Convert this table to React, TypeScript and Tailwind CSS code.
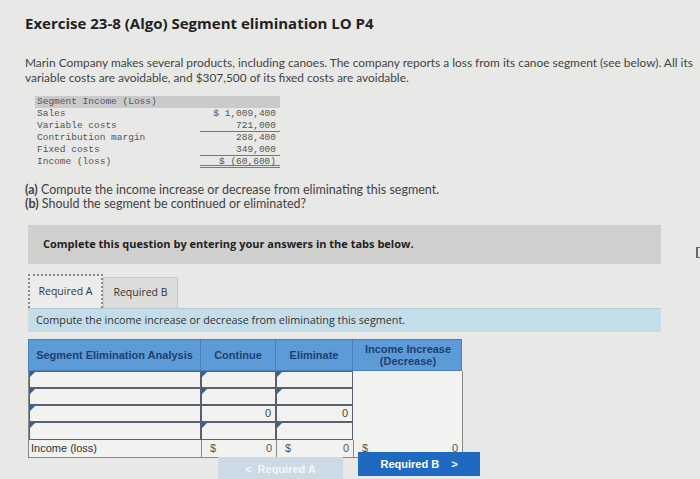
import React from "react";

const segmentRows = [
  { label: "Sales", value: "$ 1,009,400", line: "" },
  { label: "Variable costs", value: "721,000", line: "single" },
  { label: "Contribution margin", value: "288,400", line: "" },
  { label: "Fixed costs", value: "349,000", line: "single" },
  { label: "Income (loss)", value: "$ (60,600)", line: "double" },
];

const Marker = () => (
  <span className="absolute left-0 top-0 w-0 h-0 border-t-[5px] border-t-[#2f5f9e] border-r-[5px] border-r-transparent" />
);

const InputCell = ({ value, marker = true }: { value?: string; marker?: boolean }) => (
  <div className="relative h-full border border-[#56606e] bg-[#f2f2f0] flex items-center justify-end pr-1 text-[11px] text-[#444]">
    {marker && <Marker />}
    {value}
  </div>
);

export default function App() {
  return (
    <div className="w-[700px] h-[479px] overflow-hidden bg-[#e8e8e6] text-[#333] relative" style={{ fontFamily: "Lato, 'Open Sans', sans-serif" }}>
      <div className="pl-[25px] pt-[13px]">
        <h1 className="text-[15px] font-bold text-[#222] leading-[21px]" style={{ fontFamily: "'Open Sans', sans-serif" }}>
          Exercise 23-8 (Algo) Segment elimination LO P4
        </h1>
        <p className="mt-[21px] text-[11.9px] leading-[15px] text-[#444] whitespace-nowrap">
          Marin Company makes several products, including canoes. The company reports a loss from its canoe segment (see below). All its
          <br />
          variable costs are avoidable, and $307,500 of its fixed costs are avoidable.
        </p>

        <div className="mt-[11px] ml-[10px] w-[245px] text-[9.5px] leading-[12px] text-[#555]" style={{ fontFamily: "'Liberation Mono', monospace" }}>
          <div className="bg-[#c9cacc] pl-[2px] h-[12px]">Segment Income (Loss)</div>
          {segmentRows.map((r) => (
            <div key={r.label} className="flex justify-between pl-[2px] h-[12px]">
              <span>{r.label}</span>
              <span
                className={
                  "w-[80px] text-right pr-[4px] " +
                  (r.line === "single" ? "border-b border-[#777]" : r.line === "double" ? "border-b-[3px] border-double border-[#777]" : "")
                }
              >
                {r.value}
              </span>
            </div>
          ))}
        </div>

        <div className="mt-[15px] text-[12.5px] leading-[14px] text-[#444]">
          <p><span className="font-bold">(a)</span> Compute the income increase or decrease from eliminating this segment.</p>
          <p><span className="font-bold">(b)</span> Should the segment be continued or eliminated?</p>
        </div>
      </div>

      <div className="ml-[28px] mt-[14px] w-[633px] h-[39px] bg-[#cfd0ce] flex items-center pl-[15px] text-[11px] font-bold text-[#222]" style={{ fontFamily: "'Open Sans', sans-serif" }}>
        Complete this question by entering your answers in the tabs below.
      </div>
      <span className="absolute left-[696px] top-[247px] w-[6px] h-[11px] border-l-2 border-t border-b border-[#666]" />

      <div className="ml-[28px] mt-[10px] flex items-end h-[34px]" style={{ fontFamily: "'Open Sans', sans-serif" }}>
        <div className="w-[75px] h-[34px] border-2 border-dotted border-[#888] border-b-0 bg-[#ecedeb] flex items-center justify-center text-[10.5px] text-[#333]">
          Required A
        </div>
        <div className="w-[75px] h-[31px] border border-[#c8c8c6] border-b-0 bg-[#dcdcda] flex items-center justify-center text-[10.5px] text-[#333]">
          Required B
        </div>
      </div>
      <div className="ml-[28px] w-[633px] h-[24px] bg-[#c4dde8] border-t border-[#b5ccd6] flex items-center pl-[8px] text-[10.8px] text-[#333]" style={{ fontFamily: "'Open Sans', sans-serif" }}>
        Compute the income increase or decrease from eliminating this segment.
      </div>

      <div className="ml-[28px] mt-[7px] w-[434px]" style={{ fontFamily: "'Liberation Sans', Arial, sans-serif" }}>
        <div className="grid grid-cols-[172px_75px_77px_110px] h-[32px] bg-[#5d9bd8] border border-[#4a7fb8] text-[11px] font-bold text-[#1d3f6e]">
          <div className="flex items-center justify-center border-r border-[#4a7fb8]">Segment Elimination Analysis</div>
          <div className="flex items-center justify-center border-r border-[#4a7fb8]">Continue</div>
          <div className="flex items-center justify-center border-r border-[#4a7fb8]">Eliminate</div>
          <div className="flex flex-col items-center justify-center leading-[12px]">
            <span>Income Increase</span>
            <span>(Decrease)</span>
          </div>
        </div>
        <div className="grid grid-cols-[172px_75px_77px_110px] grid-rows-[17px_17px_17px_18px_18px] border-l border-[#888] bg-[#f2f2f0]">
          <InputCell />
          <InputCell />
          <InputCell />
          <div className="row-span-4 border-r border-[#888] bg-[#f2f2f0]" />
          <InputCell />
          <InputCell />
          <InputCell />
          <InputCell />
          <InputCell value="0" marker={false} />
          <InputCell value="0" marker={false} />
          <InputCell />
          <InputCell />
          <InputCell />
          <div className="flex items-end pl-[2px] pb-[1px] text-[11px] text-[#333] border-b border-[#888]">Income (loss)</div>
          <div className="flex items-center justify-between px-[8px] pr-[4px] text-[11px] text-[#555] border-l border-b border-[#888]">
            <span>$</span><span>0</span>
          </div>
          <div className="flex items-center justify-between px-[8px] pr-[4px] text-[11px] text-[#555] border-l border-b border-[#888]">
            <span>$</span><span>0</span>
          </div>
          <div className="flex items-center justify-between px-[8px] pr-[4px] text-[11px] text-[#555] border-l border-r border-b border-[#888]">
            <span>$</span><span>0</span>
          </div>
        </div>
      </div>

      <div className="ml-[218px] mt-[-6px] flex gap-[15px]" style={{ fontFamily: "'Liberation Sans', Arial, sans-serif" }}>
        <div className="w-[125px] h-[24px] mt-[5px] bg-[#cbdae5] flex items-center justify-center text-[11px] font-bold text-[#f4f7fa]">
          <span className="mr-[6px]">&lt;</span>Required A
        </div>
        <div className="w-[122px] h-[24px] bg-[#1e6ac0] flex items-center justify-center text-[11px] font-bold text-white">
          Required B<span className="ml-[12px]">&gt;</span>
        </div>
      </div>
    </div>
  );
}
